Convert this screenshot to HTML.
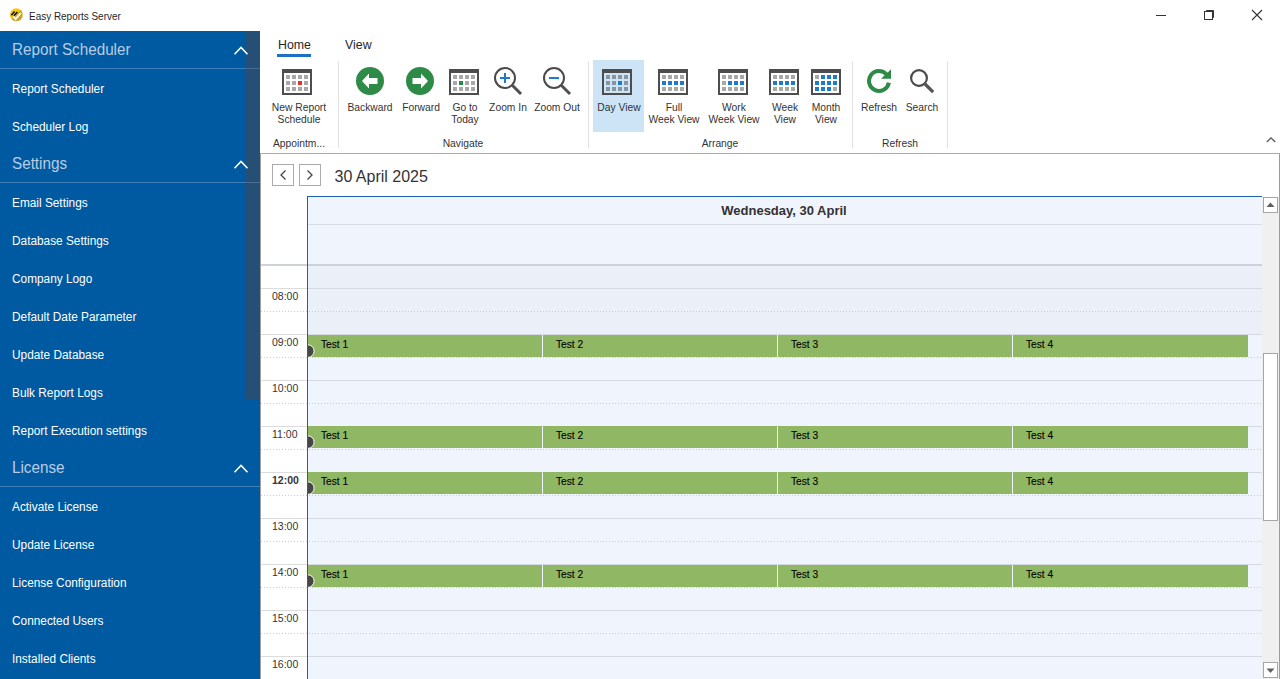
<!DOCTYPE html>
<html><head><meta charset="utf-8"><title>Easy Reports Server</title>
<style>
html,body{margin:0;padding:0;width:1280px;height:679px;overflow:hidden;background:#fff;font-family:"Liberation Sans", sans-serif;}
.r{position:absolute;box-sizing:content-box;}
.t{position:absolute;white-space:nowrap;}
svg{display:block;}
</style></head><body>
<div class="r" style="left:0px;top:0px;width:1280px;height:31px;background:#fff;"></div>
<svg class="r" style="left:0;top:0" width="40" height="31">
<defs><clipPath id="ic"><circle cx="16.3" cy="14.7" r="6.4"/></clipPath></defs>
<circle cx="16.3" cy="14.7" r="6.4" fill="#F6C80E"/>
<path d="M10 21 L22.7 8.3 L22.7 21 Z" fill="#C9A227" clip-path="url(#ic)"/>
<path d="M13.6 16.6 L15.6 19 L20.8 13" stroke="#fff" stroke-width="1.9" fill="none"/>
<path d="M11.3 15.3 L14.6 11.6 M13.9 15.7 L17.4 11.9" stroke="#111" stroke-width="1.5"/>
</svg>
<div class="t" style="left:29px;top:10.67px;font-size:11.5px;line-height:11.5px;color:#1f1f1f;font-weight:400;transform:scaleX(0.865);transform-origin:0 0;">Easy Reports Server</div>
<div class="r" style="left:1156px;top:15px;width:10px;height:1px;background:#333;"></div>
<svg class="r" style="left:1200px;top:6px" width="20" height="18">
<rect x="4.5" y="5.5" width="8" height="8" fill="none" stroke="#333" stroke-width="1"/>
<path d="M6.5 5.5 V4.5 H13.5 V11.5 H12.5" fill="none" stroke="#333" stroke-width="1"/>
</svg>
<svg class="r" style="left:1248px;top:6px" width="20" height="18">
<path d="M4 4 L14 14 M14 4 L4 14" stroke="#333" stroke-width="1.1"/>
</svg>
<div class="r" style="left:0px;top:31px;width:260px;height:648px;background:#005AA1;"></div>
<div class="r" style="left:245px;top:31px;width:15px;height:369px;background:#264F75;"></div>
<div class="t" style="left:11.8px;top:42.46px;font-size:16px;line-height:16px;color:#B9CDE5;font-weight:400;transform:scaleX(0.952);transform-origin:0 0;">Report Scheduler</div>
<svg class="r" style="left:233px;top:44.5px" width="17" height="11"><path d="M1.5 9.2 L8 2.4 L14.5 9.2" stroke="#fff" stroke-width="1.5" fill="none"/></svg>
<div class="r" style="left:0px;top:68px;width:245px;height:1px;background:#3F7EBB;"></div>
<div class="r" style="left:245px;top:68px;width:15px;height:1px;background:#4A6E92;"></div>
<div class="t" style="left:12.3px;top:82.62px;font-size:12.5px;line-height:12.5px;color:#fff;font-weight:400;transform:scaleX(0.947);transform-origin:0 0;">Report Scheduler</div>
<div class="t" style="left:12.3px;top:120.62px;font-size:12.5px;line-height:12.5px;color:#fff;font-weight:400;transform:scaleX(0.947);transform-origin:0 0;">Scheduler Log</div>
<div class="t" style="left:11.8px;top:156.46px;font-size:16px;line-height:16px;color:#B9CDE5;font-weight:400;transform:scaleX(0.952);transform-origin:0 0;">Settings</div>
<svg class="r" style="left:233px;top:158.5px" width="17" height="11"><path d="M1.5 9.2 L8 2.4 L14.5 9.2" stroke="#fff" stroke-width="1.5" fill="none"/></svg>
<div class="r" style="left:0px;top:182px;width:245px;height:1px;background:#3F7EBB;"></div>
<div class="r" style="left:245px;top:182px;width:15px;height:1px;background:#4A6E92;"></div>
<div class="t" style="left:12.3px;top:196.62px;font-size:12.5px;line-height:12.5px;color:#fff;font-weight:400;transform:scaleX(0.947);transform-origin:0 0;">Email Settings</div>
<div class="t" style="left:12.3px;top:234.62px;font-size:12.5px;line-height:12.5px;color:#fff;font-weight:400;transform:scaleX(0.947);transform-origin:0 0;">Database Settings</div>
<div class="t" style="left:12.3px;top:272.62px;font-size:12.5px;line-height:12.5px;color:#fff;font-weight:400;transform:scaleX(0.947);transform-origin:0 0;">Company Logo</div>
<div class="t" style="left:12.3px;top:310.62px;font-size:12.5px;line-height:12.5px;color:#fff;font-weight:400;transform:scaleX(0.947);transform-origin:0 0;">Default Date Parameter</div>
<div class="t" style="left:12.3px;top:348.62px;font-size:12.5px;line-height:12.5px;color:#fff;font-weight:400;transform:scaleX(0.947);transform-origin:0 0;">Update Database</div>
<div class="t" style="left:12.3px;top:386.62px;font-size:12.5px;line-height:12.5px;color:#fff;font-weight:400;transform:scaleX(0.947);transform-origin:0 0;">Bulk Report Logs</div>
<div class="t" style="left:12.3px;top:424.62px;font-size:12.5px;line-height:12.5px;color:#fff;font-weight:400;transform:scaleX(0.947);transform-origin:0 0;">Report Execution settings</div>
<div class="t" style="left:11.8px;top:460.46px;font-size:16px;line-height:16px;color:#B9CDE5;font-weight:400;transform:scaleX(0.952);transform-origin:0 0;">License</div>
<svg class="r" style="left:233px;top:462.5px" width="17" height="11"><path d="M1.5 9.2 L8 2.4 L14.5 9.2" stroke="#fff" stroke-width="1.5" fill="none"/></svg>
<div class="r" style="left:0px;top:486px;width:245px;height:1px;background:#3F7EBB;"></div>
<div class="r" style="left:245px;top:486px;width:15px;height:1px;background:#3F7EBB;"></div>
<div class="t" style="left:12.3px;top:500.62px;font-size:12.5px;line-height:12.5px;color:#fff;font-weight:400;transform:scaleX(0.947);transform-origin:0 0;">Activate License</div>
<div class="t" style="left:12.3px;top:538.62px;font-size:12.5px;line-height:12.5px;color:#fff;font-weight:400;transform:scaleX(0.947);transform-origin:0 0;">Update License</div>
<div class="t" style="left:12.3px;top:576.62px;font-size:12.5px;line-height:12.5px;color:#fff;font-weight:400;transform:scaleX(0.947);transform-origin:0 0;">License Configuration</div>
<div class="t" style="left:12.3px;top:614.62px;font-size:12.5px;line-height:12.5px;color:#fff;font-weight:400;transform:scaleX(0.947);transform-origin:0 0;">Connected Users</div>
<div class="t" style="left:12.3px;top:652.62px;font-size:12.5px;line-height:12.5px;color:#fff;font-weight:400;transform:scaleX(0.947);transform-origin:0 0;">Installed Clients</div>
<div class="r" style="left:260px;top:31px;width:1020px;height:122px;background:#fff;"></div>
<div class="t" style="left:277.5px;top:38.00px;font-size:13px;line-height:13px;color:#262626;font-weight:400;transform:scaleX(0.95);transform-origin:0 0;">Home</div>
<div class="r" style="left:277px;top:54px;width:34px;height:3px;background:#1E6FC6;"></div>
<div class="t" style="left:345px;top:38.00px;font-size:13px;line-height:13px;color:#262626;font-weight:400;transform:scaleX(0.95);transform-origin:0 0;">View</div>
<div class="r" style="left:338px;top:61px;width:1px;height:87px;background:#E1E1E1;"></div>
<div class="r" style="left:588px;top:61px;width:1px;height:87px;background:#E1E1E1;"></div>
<div class="r" style="left:852px;top:61px;width:1px;height:87px;background:#E1E1E1;"></div>
<div class="r" style="left:947px;top:61px;width:1px;height:87px;background:#E1E1E1;"></div>
<div class="r" style="left:593px;top:60px;width:51px;height:72px;background:#CDE4F7;"></div>
<svg class="r" style="left:282px;top:69px" width="30" height="26"><rect x="0" y="0" width="30" height="26" fill="#4D4D4D"/><rect x="2" y="4" width="26" height="20" fill="#fff"/><rect x="4" y="6" width="4" height="4" fill="#A8A8A8"/><rect x="10" y="6" width="4" height="4" fill="#A8A8A8"/><rect x="16" y="6" width="4" height="4" fill="#A8A8A8"/><rect x="22" y="6" width="4" height="4" fill="#A8A8A8"/><rect x="4" y="12" width="4" height="4" fill="#A8A8A8"/><rect x="10" y="12" width="4" height="4" fill="#A8A8A8"/><rect x="16" y="12" width="4" height="4" fill="#E5312F"/><rect x="22" y="12" width="4" height="4" fill="#A8A8A8"/><rect x="4" y="18" width="4" height="4" fill="#A8A8A8"/><rect x="10" y="18" width="4" height="4" fill="#A8A8A8"/><rect x="16" y="18" width="4" height="4" fill="#A8A8A8"/><rect x="22" y="18" width="4" height="4" fill="#A8A8A8"/></svg>
<svg class="r" style="left:449px;top:69px" width="30" height="26"><rect x="0" y="0" width="30" height="26" fill="#4D4D4D"/><rect x="2" y="4" width="26" height="20" fill="#fff"/><rect x="4" y="6" width="4" height="4" fill="#A8A8A8"/><rect x="10" y="6" width="4" height="4" fill="#A8A8A8"/><rect x="16" y="6" width="4" height="4" fill="#A8A8A8"/><rect x="22" y="6" width="4" height="4" fill="#A8A8A8"/><rect x="4" y="12" width="4" height="4" fill="#A8A8A8"/><rect x="10" y="12" width="4" height="4" fill="#1E8F45"/><rect x="16" y="12" width="4" height="4" fill="#A8A8A8"/><rect x="22" y="12" width="4" height="4" fill="#A8A8A8"/><rect x="4" y="18" width="4" height="4" fill="#A8A8A8"/><rect x="10" y="18" width="4" height="4" fill="#A8A8A8"/><rect x="16" y="18" width="4" height="4" fill="#A8A8A8"/><rect x="22" y="18" width="4" height="4" fill="#A8A8A8"/></svg>
<svg class="r" style="left:602px;top:69px" width="30" height="26"><rect x="0" y="0" width="30" height="26" fill="#4D4D4D"/><rect x="2" y="4" width="26" height="20" fill="#CDE4F7"/><rect x="4" y="6" width="4" height="4" fill="#8A949E"/><rect x="10" y="6" width="4" height="4" fill="#8A949E"/><rect x="16" y="6" width="4" height="4" fill="#8A949E"/><rect x="22" y="6" width="4" height="4" fill="#8A949E"/><rect x="4" y="12" width="4" height="4" fill="#8A949E"/><rect x="10" y="12" width="4" height="4" fill="#8A949E"/><rect x="16" y="12" width="4" height="4" fill="#1E7ACB"/><rect x="22" y="12" width="4" height="4" fill="#8A949E"/><rect x="4" y="18" width="4" height="4" fill="#8A949E"/><rect x="10" y="18" width="4" height="4" fill="#8A949E"/><rect x="16" y="18" width="4" height="4" fill="#8A949E"/><rect x="22" y="18" width="4" height="4" fill="#8A949E"/></svg>
<svg class="r" style="left:658px;top:69px" width="30" height="26"><rect x="0" y="0" width="30" height="26" fill="#4D4D4D"/><rect x="2" y="4" width="26" height="20" fill="#fff"/><rect x="4" y="6" width="4" height="4" fill="#A8A8A8"/><rect x="10" y="6" width="4" height="4" fill="#A8A8A8"/><rect x="16" y="6" width="4" height="4" fill="#A8A8A8"/><rect x="22" y="6" width="4" height="4" fill="#A8A8A8"/><rect x="4" y="12" width="4" height="4" fill="#1E7ACB"/><rect x="10" y="12" width="4" height="4" fill="#1E7ACB"/><rect x="16" y="12" width="4" height="4" fill="#1E7ACB"/><rect x="22" y="12" width="4" height="4" fill="#1E7ACB"/><rect x="4" y="18" width="4" height="4" fill="#A8A8A8"/><rect x="10" y="18" width="4" height="4" fill="#A8A8A8"/><rect x="16" y="18" width="4" height="4" fill="#A8A8A8"/><rect x="22" y="18" width="4" height="4" fill="#A8A8A8"/></svg>
<svg class="r" style="left:718px;top:69px" width="30" height="26"><rect x="0" y="0" width="30" height="26" fill="#4D4D4D"/><rect x="2" y="4" width="26" height="20" fill="#fff"/><rect x="4" y="6" width="4" height="4" fill="#A8A8A8"/><rect x="10" y="6" width="4" height="4" fill="#A8A8A8"/><rect x="16" y="6" width="4" height="4" fill="#A8A8A8"/><rect x="22" y="6" width="4" height="4" fill="#A8A8A8"/><rect x="4" y="12" width="4" height="4" fill="#A8A8A8"/><rect x="10" y="12" width="4" height="4" fill="#1E7ACB"/><rect x="16" y="12" width="4" height="4" fill="#1E7ACB"/><rect x="22" y="12" width="4" height="4" fill="#1E7ACB"/><rect x="4" y="18" width="4" height="4" fill="#A8A8A8"/><rect x="10" y="18" width="4" height="4" fill="#A8A8A8"/><rect x="16" y="18" width="4" height="4" fill="#A8A8A8"/><rect x="22" y="18" width="4" height="4" fill="#A8A8A8"/></svg>
<svg class="r" style="left:769px;top:69px" width="30" height="26"><rect x="0" y="0" width="30" height="26" fill="#4D4D4D"/><rect x="2" y="4" width="26" height="20" fill="#fff"/><rect x="4" y="6" width="4" height="4" fill="#A8A8A8"/><rect x="10" y="6" width="4" height="4" fill="#A8A8A8"/><rect x="16" y="6" width="4" height="4" fill="#A8A8A8"/><rect x="22" y="6" width="4" height="4" fill="#A8A8A8"/><rect x="4" y="12" width="4" height="4" fill="#1E7ACB"/><rect x="10" y="12" width="4" height="4" fill="#1E7ACB"/><rect x="16" y="12" width="4" height="4" fill="#1E7ACB"/><rect x="22" y="12" width="4" height="4" fill="#1E7ACB"/><rect x="4" y="18" width="4" height="4" fill="#A8A8A8"/><rect x="10" y="18" width="4" height="4" fill="#A8A8A8"/><rect x="16" y="18" width="4" height="4" fill="#A8A8A8"/><rect x="22" y="18" width="4" height="4" fill="#A8A8A8"/></svg>
<svg class="r" style="left:811px;top:69px" width="30" height="26"><rect x="0" y="0" width="30" height="26" fill="#4D4D4D"/><rect x="2" y="4" width="26" height="20" fill="#fff"/><rect x="4" y="6" width="4" height="4" fill="#A8A8A8"/><rect x="10" y="6" width="4" height="4" fill="#1E7ACB"/><rect x="16" y="6" width="4" height="4" fill="#1E7ACB"/><rect x="22" y="6" width="4" height="4" fill="#1E7ACB"/><rect x="4" y="12" width="4" height="4" fill="#1E7ACB"/><rect x="10" y="12" width="4" height="4" fill="#1E7ACB"/><rect x="16" y="12" width="4" height="4" fill="#1E7ACB"/><rect x="22" y="12" width="4" height="4" fill="#1E7ACB"/><rect x="4" y="18" width="4" height="4" fill="#1E7ACB"/><rect x="10" y="18" width="4" height="4" fill="#1E7ACB"/><rect x="16" y="18" width="4" height="4" fill="#1E7ACB"/><rect x="22" y="18" width="4" height="4" fill="#A8A8A8"/></svg>
<svg class="r" style="left:356px;top:67px" width="28" height="28">
<circle cx="14" cy="14" r="14" fill="#2E8B47"/>
<path d="M6 14 L13 6.5 L13 11 L21.5 11 L21.5 17 L13 17 L13 21.5 Z" fill="#fff"/>
</svg>
<svg class="r" style="left:406px;top:67px" width="28" height="28">
<circle cx="14" cy="14" r="14" fill="#2E8B47"/>
<path d="M22 14 L15 6.5 L15 11 L6.5 11 L6.5 17 L15 17 L15 21.5 Z" fill="#fff"/>
</svg>
<svg class="r" style="left:494px;top:67px" width="30" height="30"><circle cx="11" cy="11" r="10" stroke="#4A4A4A" stroke-width="2" fill="none"/><path d="M18.5 18.5 L27 27" stroke="#505050" stroke-width="3"/><path d="M11 6 V16 M6 11 H16" stroke="#1E7ACB" stroke-width="2"/></svg>
<svg class="r" style="left:543px;top:67px" width="30" height="30"><circle cx="11" cy="11" r="10" stroke="#4A4A4A" stroke-width="2" fill="none"/><path d="M18.5 18.5 L27 27" stroke="#505050" stroke-width="3"/><path d="M6 11 H16" stroke="#1E7ACB" stroke-width="2"/></svg>
<svg class="r" style="left:904px;top:63px" width="34" height="34">
<circle cx="15" cy="15" r="7.9" stroke="#4A4A4A" stroke-width="2.2" fill="none"/>
<path d="M20.5 20.5 L29.2 29.2" stroke="#555" stroke-width="3.2"/>
</svg>
<svg class="r" style="left:866px;top:68px" width="28" height="28">
<path d="M20.66 6.47 A10 10 0 1 0 22.85 14.64" stroke="#2E8B47" stroke-width="4" fill="none"/>
<path d="M25 1.2 L25 10.75 L15 10.75 Z" fill="#2E8B47"/>
</svg>
<div class="t" style="left:253.80px;width:90px;text-align:center;top:101.69px;font-size:11px;line-height:11px;color:#333;font-weight:400;transform:scaleX(0.935);transform-origin:50% 0;">New Report</div>
<div class="t" style="left:253.80px;width:90px;text-align:center;top:114.19px;font-size:11px;line-height:11px;color:#333;font-weight:400;transform:scaleX(0.935);transform-origin:50% 0;">Schedule</div>
<div class="t" style="left:325.00px;width:90px;text-align:center;top:101.69px;font-size:11px;line-height:11px;color:#333;font-weight:400;transform:scaleX(0.935);transform-origin:50% 0;">Backward</div>
<div class="t" style="left:375.50px;width:90px;text-align:center;top:101.69px;font-size:11px;line-height:11px;color:#333;font-weight:400;transform:scaleX(0.935);transform-origin:50% 0;">Forward</div>
<div class="t" style="left:419.50px;width:90px;text-align:center;top:101.69px;font-size:11px;line-height:11px;color:#333;font-weight:400;transform:scaleX(0.935);transform-origin:50% 0;">Go to</div>
<div class="t" style="left:419.50px;width:90px;text-align:center;top:114.19px;font-size:11px;line-height:11px;color:#333;font-weight:400;transform:scaleX(0.935);transform-origin:50% 0;">Today</div>
<div class="t" style="left:463.20px;width:90px;text-align:center;top:101.69px;font-size:11px;line-height:11px;color:#333;font-weight:400;transform:scaleX(0.935);transform-origin:50% 0;">Zoom In</div>
<div class="t" style="left:512.20px;width:90px;text-align:center;top:101.69px;font-size:11px;line-height:11px;color:#333;font-weight:400;transform:scaleX(0.935);transform-origin:50% 0;">Zoom Out</div>
<div class="t" style="left:573.50px;width:90px;text-align:center;top:101.69px;font-size:11px;line-height:11px;color:#333;font-weight:400;transform:scaleX(0.935);transform-origin:50% 0;">Day View</div>
<div class="t" style="left:628.50px;width:90px;text-align:center;top:101.69px;font-size:11px;line-height:11px;color:#333;font-weight:400;transform:scaleX(0.935);transform-origin:50% 0;">Full</div>
<div class="t" style="left:628.50px;width:90px;text-align:center;top:114.19px;font-size:11px;line-height:11px;color:#333;font-weight:400;transform:scaleX(0.935);transform-origin:50% 0;">Week View</div>
<div class="t" style="left:688.50px;width:90px;text-align:center;top:101.69px;font-size:11px;line-height:11px;color:#333;font-weight:400;transform:scaleX(0.935);transform-origin:50% 0;">Work</div>
<div class="t" style="left:688.50px;width:90px;text-align:center;top:114.19px;font-size:11px;line-height:11px;color:#333;font-weight:400;transform:scaleX(0.935);transform-origin:50% 0;">Week View</div>
<div class="t" style="left:739.50px;width:90px;text-align:center;top:101.69px;font-size:11px;line-height:11px;color:#333;font-weight:400;transform:scaleX(0.935);transform-origin:50% 0;">Week</div>
<div class="t" style="left:739.50px;width:90px;text-align:center;top:114.19px;font-size:11px;line-height:11px;color:#333;font-weight:400;transform:scaleX(0.935);transform-origin:50% 0;">View</div>
<div class="t" style="left:781.30px;width:90px;text-align:center;top:101.69px;font-size:11px;line-height:11px;color:#333;font-weight:400;transform:scaleX(0.935);transform-origin:50% 0;">Month</div>
<div class="t" style="left:781.30px;width:90px;text-align:center;top:114.19px;font-size:11px;line-height:11px;color:#333;font-weight:400;transform:scaleX(0.935);transform-origin:50% 0;">View</div>
<div class="t" style="left:833.80px;width:90px;text-align:center;top:101.69px;font-size:11px;line-height:11px;color:#333;font-weight:400;transform:scaleX(0.935);transform-origin:50% 0;">Refresh</div>
<div class="t" style="left:876.50px;width:90px;text-align:center;top:101.69px;font-size:11px;line-height:11px;color:#333;font-weight:400;transform:scaleX(0.935);transform-origin:50% 0;">Search</div>
<div class="t" style="left:254.00px;width:90px;text-align:center;top:137.69px;font-size:11px;line-height:11px;color:#333;font-weight:400;transform:scaleX(0.935);transform-origin:50% 0;">Appointm...</div>
<div class="t" style="left:418.00px;width:90px;text-align:center;top:137.69px;font-size:11px;line-height:11px;color:#333;font-weight:400;transform:scaleX(0.935);transform-origin:50% 0;">Navigate</div>
<div class="t" style="left:675.00px;width:90px;text-align:center;top:137.69px;font-size:11px;line-height:11px;color:#333;font-weight:400;transform:scaleX(0.935);transform-origin:50% 0;">Arrange</div>
<div class="t" style="left:855.00px;width:90px;text-align:center;top:137.69px;font-size:11px;line-height:11px;color:#333;font-weight:400;transform:scaleX(0.935);transform-origin:50% 0;">Refresh</div>
<svg class="r" style="left:1265px;top:135px" width="12" height="9"><path d="M1.8 7 L6 2.8 L10.2 7" stroke="#555" stroke-width="1.3" fill="none"/></svg>
<div class="r" style="left:260px;top:153px;width:1020px;height:1px;background:#ABABAB;"></div>
<div class="r" style="left:260px;top:154px;width:1px;height:525px;background:#A0A0A0;"></div>
<div class="r" style="left:1279px;top:154px;width:1px;height:525px;background:#9C9C9C;"></div>
<div class="r" style="left:261px;top:154px;width:1018px;height:525px;background:#fff;"></div>
<div class="r" style="left:272px;top:164px;width:20px;height:20px;border:1px solid #ABABAB;background:#fff"></div>
<div class="r" style="left:299px;top:164px;width:20px;height:20px;border:1px solid #ABABAB;background:#fff"></div>
<svg class="r" style="left:272px;top:164px" width="50" height="22">
<path d="M13.5 6.5 L9 11 L13.5 15.5" stroke="#444" stroke-width="1.3" fill="none"/>
<path d="M35.5 6.5 L40 11 L35.5 15.5" stroke="#444" stroke-width="1.3" fill="none"/>
</svg>
<div class="t" style="left:334.5px;top:168.66px;font-size:16px;line-height:16px;color:#333;font-weight:400;">30 April 2025</div>
<div class="r" style="left:308px;top:197px;width:954px;height:68px;background:#F0F4FD;"></div>
<div class="r" style="left:308px;top:265px;width:954px;height:70px;background:#EBEFF8;"></div>
<div class="r" style="left:308px;top:335px;width:954px;height:344px;background:#F0F4FD;"></div>
<div class="r" style="left:307px;top:196px;width:955px;height:1px;background:#1C63AE;"></div>
<div class="r" style="left:307px;top:196px;width:1px;height:483px;background:#1C63AE;"></div>
<div class="r" style="left:308px;top:224px;width:954px;height:1px;background:#D8DDE5;"></div>
<div class="t" style="left:684.00px;width:200px;text-align:center;top:204.00px;font-size:13px;line-height:13px;color:#333;font-weight:700;">Wednesday, 30 April</div>
<div class="r" style="left:261px;top:264px;width:1001px;height:2px;background:#CDD2DA;"></div>
<div class="r" style="left:261px;top:288px;width:46px;height:1px;background:#DCDCDC;"></div>
<div class="r" style="left:308px;top:288px;width:954px;height:1px;background:#D5DAE2;"></div>
<div class="r" style="left:261px;top:311px;width:1001px;height:1px;background-image:linear-gradient(to right,#C8CCD2 0 1px,transparent 1px 3px);background-size:3px 1px"></div>
<div class="t" style="left:272px;top:290.71px;font-size:10.5px;line-height:10.5px;color:#333;font-weight:400;">08:00</div>
<div class="r" style="left:261px;top:334px;width:46px;height:1px;background:#DCDCDC;"></div>
<div class="r" style="left:308px;top:334px;width:954px;height:1px;background:#D5DAE2;"></div>
<div class="r" style="left:261px;top:357px;width:1001px;height:1px;background-image:linear-gradient(to right,#C8CCD2 0 1px,transparent 1px 3px);background-size:3px 1px"></div>
<div class="t" style="left:272px;top:336.71px;font-size:10.5px;line-height:10.5px;color:#333;font-weight:400;">09:00</div>
<div class="r" style="left:261px;top:380px;width:46px;height:1px;background:#DCDCDC;"></div>
<div class="r" style="left:308px;top:380px;width:954px;height:1px;background:#D5DAE2;"></div>
<div class="r" style="left:261px;top:403px;width:1001px;height:1px;background-image:linear-gradient(to right,#C8CCD2 0 1px,transparent 1px 3px);background-size:3px 1px"></div>
<div class="t" style="left:272px;top:382.71px;font-size:10.5px;line-height:10.5px;color:#333;font-weight:400;">10:00</div>
<div class="r" style="left:261px;top:426px;width:46px;height:1px;background:#DCDCDC;"></div>
<div class="r" style="left:308px;top:426px;width:954px;height:1px;background:#D5DAE2;"></div>
<div class="r" style="left:261px;top:449px;width:1001px;height:1px;background-image:linear-gradient(to right,#C8CCD2 0 1px,transparent 1px 3px);background-size:3px 1px"></div>
<div class="t" style="left:272px;top:428.71px;font-size:10.5px;line-height:10.5px;color:#333;font-weight:400;">11:00</div>
<div class="r" style="left:261px;top:472px;width:46px;height:1px;background:#DCDCDC;"></div>
<div class="r" style="left:308px;top:472px;width:954px;height:1px;background:#D5DAE2;"></div>
<div class="r" style="left:261px;top:495px;width:1001px;height:1px;background-image:linear-gradient(to right,#C8CCD2 0 1px,transparent 1px 3px);background-size:3px 1px"></div>
<div class="t" style="left:272px;top:474.71px;font-size:10.5px;line-height:10.5px;color:#333;font-weight:700;">12:00</div>
<div class="r" style="left:261px;top:518px;width:46px;height:1px;background:#DCDCDC;"></div>
<div class="r" style="left:308px;top:518px;width:954px;height:1px;background:#D5DAE2;"></div>
<div class="r" style="left:261px;top:541px;width:1001px;height:1px;background-image:linear-gradient(to right,#C8CCD2 0 1px,transparent 1px 3px);background-size:3px 1px"></div>
<div class="t" style="left:272px;top:520.71px;font-size:10.5px;line-height:10.5px;color:#333;font-weight:400;">13:00</div>
<div class="r" style="left:261px;top:564px;width:46px;height:1px;background:#DCDCDC;"></div>
<div class="r" style="left:308px;top:564px;width:954px;height:1px;background:#D5DAE2;"></div>
<div class="r" style="left:261px;top:587px;width:1001px;height:1px;background-image:linear-gradient(to right,#C8CCD2 0 1px,transparent 1px 3px);background-size:3px 1px"></div>
<div class="t" style="left:272px;top:566.71px;font-size:10.5px;line-height:10.5px;color:#333;font-weight:400;">14:00</div>
<div class="r" style="left:261px;top:610px;width:46px;height:1px;background:#DCDCDC;"></div>
<div class="r" style="left:308px;top:610px;width:954px;height:1px;background:#D5DAE2;"></div>
<div class="r" style="left:261px;top:633px;width:1001px;height:1px;background-image:linear-gradient(to right,#C8CCD2 0 1px,transparent 1px 3px);background-size:3px 1px"></div>
<div class="t" style="left:272px;top:612.71px;font-size:10.5px;line-height:10.5px;color:#333;font-weight:400;">15:00</div>
<div class="r" style="left:261px;top:656px;width:46px;height:1px;background:#DCDCDC;"></div>
<div class="r" style="left:308px;top:656px;width:954px;height:1px;background:#D5DAE2;"></div>
<div class="t" style="left:272px;top:658.71px;font-size:10.5px;line-height:10.5px;color:#333;font-weight:400;">16:00</div>
<div class="r" style="left:308px;top:335px;width:234px;height:22px;background:#90B763;"></div>
<div class="t" style="left:321px;top:340.37px;font-size:10.2px;line-height:10.2px;color:#000;font-weight:400;-webkit-text-stroke:0.1px #000;">Test 1</div>
<div class="r" style="left:543px;top:335px;width:234px;height:22px;background:#90B763;"></div>
<div class="t" style="left:556px;top:340.37px;font-size:10.2px;line-height:10.2px;color:#000;font-weight:400;-webkit-text-stroke:0.1px #000;">Test 2</div>
<div class="r" style="left:778px;top:335px;width:234px;height:22px;background:#90B763;"></div>
<div class="t" style="left:791px;top:340.37px;font-size:10.2px;line-height:10.2px;color:#000;font-weight:400;-webkit-text-stroke:0.1px #000;">Test 3</div>
<div class="r" style="left:1013px;top:335px;width:235px;height:22px;background:#90B763;"></div>
<div class="t" style="left:1026px;top:340.37px;font-size:10.2px;line-height:10.2px;color:#000;font-weight:400;-webkit-text-stroke:0.1px #000;">Test 4</div>
<svg class="r" style="left:307px;top:343px" width="10" height="16"><circle cx="0.8" cy="8.1" r="6.3" fill="#464646" stroke="#fff" stroke-width="1"/></svg>
<div class="r" style="left:308px;top:426px;width:234px;height:22px;background:#90B763;"></div>
<div class="t" style="left:321px;top:431.37px;font-size:10.2px;line-height:10.2px;color:#000;font-weight:400;-webkit-text-stroke:0.1px #000;">Test 1</div>
<div class="r" style="left:543px;top:426px;width:234px;height:22px;background:#90B763;"></div>
<div class="t" style="left:556px;top:431.37px;font-size:10.2px;line-height:10.2px;color:#000;font-weight:400;-webkit-text-stroke:0.1px #000;">Test 2</div>
<div class="r" style="left:778px;top:426px;width:234px;height:22px;background:#90B763;"></div>
<div class="t" style="left:791px;top:431.37px;font-size:10.2px;line-height:10.2px;color:#000;font-weight:400;-webkit-text-stroke:0.1px #000;">Test 3</div>
<div class="r" style="left:1013px;top:426px;width:235px;height:22px;background:#90B763;"></div>
<div class="t" style="left:1026px;top:431.37px;font-size:10.2px;line-height:10.2px;color:#000;font-weight:400;-webkit-text-stroke:0.1px #000;">Test 4</div>
<svg class="r" style="left:307px;top:434px" width="10" height="16"><circle cx="0.8" cy="8.1" r="6.3" fill="#464646" stroke="#fff" stroke-width="1"/></svg>
<div class="r" style="left:308px;top:472px;width:234px;height:22px;background:#90B763;"></div>
<div class="t" style="left:321px;top:477.37px;font-size:10.2px;line-height:10.2px;color:#000;font-weight:400;-webkit-text-stroke:0.1px #000;">Test 1</div>
<div class="r" style="left:543px;top:472px;width:234px;height:22px;background:#90B763;"></div>
<div class="t" style="left:556px;top:477.37px;font-size:10.2px;line-height:10.2px;color:#000;font-weight:400;-webkit-text-stroke:0.1px #000;">Test 2</div>
<div class="r" style="left:778px;top:472px;width:234px;height:22px;background:#90B763;"></div>
<div class="t" style="left:791px;top:477.37px;font-size:10.2px;line-height:10.2px;color:#000;font-weight:400;-webkit-text-stroke:0.1px #000;">Test 3</div>
<div class="r" style="left:1013px;top:472px;width:235px;height:22px;background:#90B763;"></div>
<div class="t" style="left:1026px;top:477.37px;font-size:10.2px;line-height:10.2px;color:#000;font-weight:400;-webkit-text-stroke:0.1px #000;">Test 4</div>
<svg class="r" style="left:307px;top:480px" width="10" height="16"><circle cx="0.8" cy="8.1" r="6.3" fill="#464646" stroke="#fff" stroke-width="1"/></svg>
<div class="r" style="left:308px;top:565px;width:234px;height:22px;background:#90B763;"></div>
<div class="t" style="left:321px;top:570.37px;font-size:10.2px;line-height:10.2px;color:#000;font-weight:400;-webkit-text-stroke:0.1px #000;">Test 1</div>
<div class="r" style="left:543px;top:565px;width:234px;height:22px;background:#90B763;"></div>
<div class="t" style="left:556px;top:570.37px;font-size:10.2px;line-height:10.2px;color:#000;font-weight:400;-webkit-text-stroke:0.1px #000;">Test 2</div>
<div class="r" style="left:778px;top:565px;width:234px;height:22px;background:#90B763;"></div>
<div class="t" style="left:791px;top:570.37px;font-size:10.2px;line-height:10.2px;color:#000;font-weight:400;-webkit-text-stroke:0.1px #000;">Test 3</div>
<div class="r" style="left:1013px;top:565px;width:235px;height:22px;background:#90B763;"></div>
<div class="t" style="left:1026px;top:570.37px;font-size:10.2px;line-height:10.2px;color:#000;font-weight:400;-webkit-text-stroke:0.1px #000;">Test 4</div>
<svg class="r" style="left:307px;top:573px" width="10" height="16"><circle cx="0.8" cy="8.1" r="6.3" fill="#464646" stroke="#fff" stroke-width="1"/></svg>
<div class="r" style="left:307px;top:196px;width:1px;height:482px;background:#1C63AE;"></div>
<div class="r" style="left:1262px;top:197px;width:17px;height:482px;background:#F0F0F0;"></div>
<div class="r" style="left:1263px;top:197px;width:13px;height:14px;border:1px solid #A6A6A6;background:#fff"></div>
<svg class="r" style="left:1263px;top:197px" width="15" height="16"><path d="M3.5 10 L7.5 5.5 L11.5 10 Z" fill="#606060"/></svg>
<div class="r" style="left:1263px;top:353px;width:13px;height:166px;border:1px solid #A6A6A6;background:#fff"></div>
<div class="r" style="left:1263px;top:662px;width:13px;height:14px;border:1px solid #A6A6A6;background:#fff"></div>
<svg class="r" style="left:1263px;top:662px" width="15" height="16"><path d="M3.5 6.5 L7.5 11 L11.5 6.5 Z" fill="#606060"/></svg>
</body></html>
